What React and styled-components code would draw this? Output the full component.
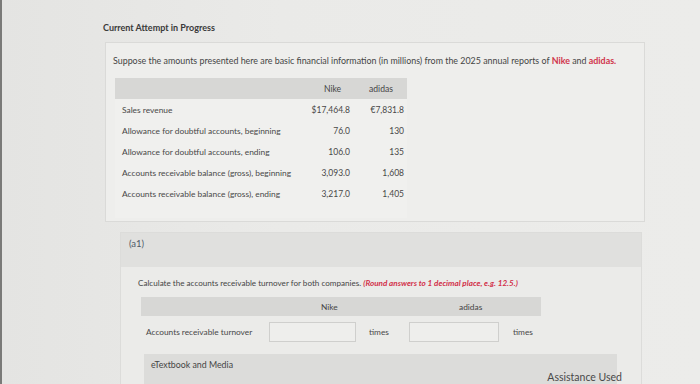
import styled, { createGlobalStyle } from "styled-components";

const GlobalStyle = createGlobalStyle`
  html, body {
    margin: 0;
    padding: 0;
    background: #e7e7e5;
  }
  body {
    font-family: "Lato", "Liberation Sans", sans-serif;
    color: #474747;
  }
`;

const rows = [
  { label: "Sales revenue", nike: "$17,464.8", adidas: "€7,831.8" },
  { label: "Allowance for doubtful accounts, beginning", nike: "76.0", adidas: "130" },
  { label: "Allowance for doubtful accounts, ending", nike: "106.0", adidas: "135" },
  { label: "Accounts receivable balance (gross), beginning", nike: "3,093.0", adidas: "1,608" },
  { label: "Accounts receivable balance (gross), ending", nike: "3,217.0", adidas: "1,405" },
];

export default function App() {
  return (
    <>
      <GlobalStyle />
      <Page>
        <Heading>Current Attempt in Progress</Heading>

        <QuestionCard>
          <Intro>
            Suppose the amounts presented here are basic financial information (in
            millions) from the 2025 annual reports of <Brand>Nike</Brand> and{" "}
            <Brand>adidas.</Brand>
          </Intro>

          <DataTable>
            <HeadCell />
            <HeadCell $center>Nike</HeadCell>
            <HeadCell $center>adidas</HeadCell>
            {rows.map((r) => (
              <DataRow key={r.label}>
                <LabelCell>{r.label}</LabelCell>
                <NumCell>{r.nike}</NumCell>
                <NumCell $last>{r.adidas}</NumCell>
              </DataRow>
            ))}
          </DataTable>
        </QuestionCard>

        <PartSection>
          <PartHeader>(a1)</PartHeader>
          <PartBody>
            <Prompt>
              Calculate the accounts receivable turnover for both companies.{" "}
              <Hint>(Round answers to 1 decimal place, e.g. 12.5.)</Hint>
            </Prompt>

            <AnswerTable>
              <AnswerHead />
              <AnswerHead $pad={52}>Nike</AnswerHead>
              <AnswerHead $pad={50}>adidas</AnswerHead>

              <AnswerLabel>Accounts receivable turnover</AnswerLabel>
              <AnswerInput type="text" $width={87} />
              <Unit $pad={13}>times</Unit>
              <AnswerInput type="text" $width={90} />
              <Unit $pad={14}>times</Unit>
            </AnswerTable>

            <MediaBox>
              <MediaTitle>eTextbook and Media</MediaTitle>
              <Assistance>Assistance Used</Assistance>
            </MediaBox>
          </PartBody>
        </PartSection>
      </Page>
    </>
  );
}

const Page = styled.div`
  width: 700px;
  height: 384px;
  overflow: hidden;
  box-sizing: border-box;
  border-left: 2px solid #7a7a78;
  padding-top: 22px;
  background: linear-gradient(90deg, #e4e4e2 0%, #eaeae8 40%, #ececea 100%);
`;

const Heading = styled.h1`
  margin: 0 0 0 101px;
  font-size: 9px;
  font-weight: 700;
  color: #3a3a3a;
  line-height: 12px;
`;

const QuestionCard = styled.div`
  margin: 8px 0 0 103px;
  width: 540px;
  height: 180px;
  box-sizing: border-box;
  border: 1px solid #dadad8;
  background: #eeeeec;
  padding: 12px 0 0 7px;
`;

const Intro = styled.p`
  margin: 0;
  font-size: 8.9px;
  line-height: 12px;
  color: #454545;
`;

const Brand = styled.span`
  color: #d0344b;
  font-weight: 700;
`;

const DataTable = styled.div`
  margin: 11px 0 0 2px;
  width: 292px;
  display: grid;
  grid-template-columns: 195px 45px 52px;
  grid-auto-rows: 21px;
  background: #f0f0ee;
  padding-bottom: 14px;
`;

const HeadCell = styled.div`
  background: #d7d7d5;
  display: flex;
  align-items: center;
  justify-content: ${(p) => (p.$center ? "center" : "flex-start")};
  font-size: 8.6px;
  color: #454545;
`;

const DataRow = styled.div`
  display: contents;
`;

const LabelCell = styled.div`
  display: flex;
  align-items: center;
  padding-left: 7px;
  font-size: 8.4px;
  color: #484848;
  white-space: nowrap;
`;

const NumCell = styled.div`
  display: flex;
  align-items: center;
  justify-content: flex-end;
  padding-right: ${(p) => (p.$last ? "3px" : "5px")};
  font-size: 8.5px;
  color: #484848;
`;

const PartSection = styled.div`
  margin: 10px 0 0 118px;
  width: 520px;
  border: 1px solid #dcdcda;
  border-bottom: none;
  background: #ebebe9;
  height: 200px;
`;

const PartHeader = styled.div`
  background: #e0e0de;
  height: 34px;
  box-sizing: border-box;
  padding: 5px 0 0 8px;
  font-size: 9.5px;
  color: #4f5a66;
`;

const PartBody = styled.div`
  padding: 11px 0 0 17px;
`;

const Prompt = styled.p`
  margin: 0;
  font-size: 8.1px;
  line-height: 11px;
  color: #454545;
  white-space: nowrap;
`;

const Hint = styled.span`
  color: #d2304a;
  font-weight: 700;
  font-style: italic;
`;

const AnswerTable = styled.div`
  margin: 8px 0 0 3px;
  width: 400px;
  display: grid;
  grid-template-columns: 128px 87px 53px 90px 42px;
  grid-template-rows: 19px 32px;
  align-items: center;
`;

const AnswerHead = styled.div`
  height: 19px;
  background: #d7d7d5;
  display: flex;
  align-items: center;
  padding-left: ${(p) => p.$pad || 0}px;
  font-size: 8.4px;
  color: #454545;
  grid-column: span ${(p) => (p.$pad ? 2 : 1)};
`;

const AnswerLabel = styled.div`
  padding-left: 5px;
  font-size: 8.3px;
  color: #484848;
  white-space: nowrap;
`;

const AnswerInput = styled.input`
  width: ${(p) => p.$width}px;
  height: 20px;
  box-sizing: border-box;
  border: 1px solid #cfcfcd;
  background: #eeeeec;
  outline: none;
  padding: 0;
`;

const Unit = styled.div`
  padding-left: ${(p) => p.$pad}px;
  font-size: 8.3px;
  color: #484848;
`;

const MediaBox = styled.div`
  margin: 6px 0 0 6px;
  width: 473px;
  height: 40px;
  background: #dcdcda;
  box-sizing: border-box;
  padding: 5px 0 0 7px;
  display: flex;
  flex-direction: column;
`;

const MediaTitle = styled.div`
  font-size: 8.8px;
  color: #454545;
`;

const Assistance = styled.div`
  align-self: flex-end;
  margin-top: 1px;
  margin-right: -5px;
  font-size: 10.5px;
  color: #484848;
`;
